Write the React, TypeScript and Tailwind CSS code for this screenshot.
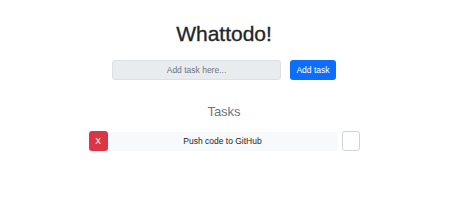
const App = () => {
  return (
    <div
      className="w-[474px] h-[221px] bg-white"
      style={{ fontFamily: '"Liberation Sans", Arial, sans-serif' }}
    >
      <div className="w-[448px] flex flex-col items-center">
        <h1 className="mt-[21px] text-[21px] leading-[25px] text-[#212529] [-webkit-text-stroke:0.3px_#212529]">
          Whattodo!
        </h1>

        <form className="mt-[14px] flex items-center gap-[9px]">
          <input
            type="text"
            placeholder="Add task here..."
            className="w-[169px] h-[20px] rounded-[3px] border border-[#dcdfe3] bg-[#e9ecef] text-center text-[8.5px] text-[#212529] placeholder:text-[#6c757d] outline-none"
          />
          <button
            type="button"
            className="w-[46px] h-[20px] rounded-[3px] bg-[#0d6efd] text-[8.5px] text-white"
          >
            Add task
          </button>
        </form>

        <h3 className="mt-[24px] text-[13px] leading-[16px] text-[#6c757d]">Tasks</h3>

        <div className="mt-[11px] flex items-center">
          <button
            type="button"
            className="w-[19px] h-[20px] rounded-[3px] bg-[#dc3545] text-[8.5px] text-white"
          >
            X
          </button>
          <div className="w-[230px] h-[19px] bg-[#f8f9fa] flex items-center justify-center text-[8.5px] text-[#212529]">
            Push code to GitHub
          </div>
          <div className="ml-[4px] w-[18px] h-[20px] rounded-[3px] border border-[#ced4da] bg-white" />
        </div>
      </div>
    </div>
  )
}

export default App
